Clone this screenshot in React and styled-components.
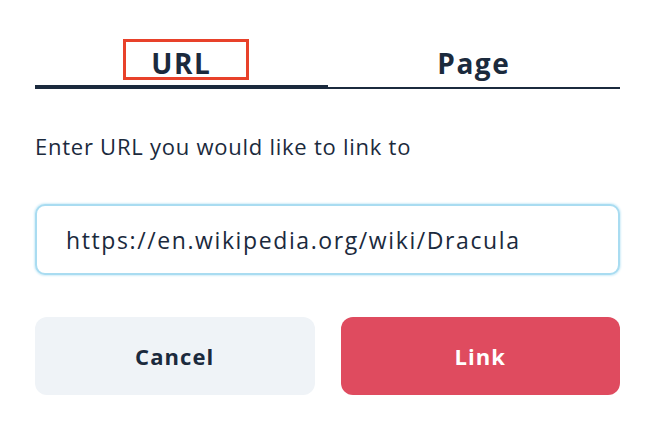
import { useState } from 'react';
import styled, { createGlobalStyle } from 'styled-components';

const GlobalStyle = createGlobalStyle`
  body {
    margin: 0;
    background: #ffffff;
    font-family: "Open Sans", "Liberation Sans", sans-serif;
    color: #1b2a3d;
  }
`;

const Dialog = styled.div`
  width: 585px;
  padding: 40px 0 0 35px;
  display: flex;
  flex-direction: column;
`;

const Tabs = styled.div`
  display: flex;
`;

const Tab = styled.button`
  position: relative;
  flex: 1;
  height: 49px;
  padding: 6px 0 9px;
  border: none;
  background: transparent;
  font-family: inherit;
  font-size: 28px;
  line-height: 34px;
  font-weight: 700;
  letter-spacing: 1.5px;
  color: #1b2a3d;
  cursor: pointer;
  box-shadow: inset 0 ${({ $active }) => ($active ? '-4px' : '-2px')} 0 #1b2a3d;
`;

/* highlight frame drawn over the active tab label */
const Highlight = styled.span`
  position: absolute;
  left: 88px;
  top: -1px;
  width: 126px;
  height: 41px;
  box-sizing: border-box;
  border: 3px solid #e8412a;
  pointer-events: none;
`;

const Label = styled.p`
  margin: 43px 0 0;
  font-size: 22px;
  line-height: 28px;
  letter-spacing: 0.75px;
`;

const UrlInput = styled.input`
  margin-top: 44px;
  height: 71px;
  box-sizing: border-box;
  padding: 0 29px;
  border: 2px solid #a9dcf1;
  border-radius: 10px;
  box-shadow: 0 0 2px 1px #d3eef9;
  font-family: inherit;
  font-size: 23px;
  letter-spacing: 1.6px;
  color: #1b2a3d;
  outline: none;
`;

const Actions = styled.div`
  margin-top: 42px;
  display: grid;
  grid-template-columns: 1fr 1fr;
  gap: 26px;
`;

const Button = styled.button`
  height: 78px;
  border: none;
  border-radius: 12px;
  font-family: inherit;
  font-size: 22px;
  font-weight: 700;
  letter-spacing: 1.1px;
  cursor: pointer;
  background: ${({ $primary }) => ($primary ? '#df4b5f' : '#eff3f7')};
  color: ${({ $primary }) => ($primary ? '#ffffff' : '#1b2a3d')};
`;

export default function App() {
  const [tab, setTab] = useState('url');
  const [url, setUrl] = useState('https://en.wikipedia.org/wiki/Dracula');

  return (
    <>
      <GlobalStyle />
      <Dialog>
        <Tabs>
          <Tab $active={tab === 'url'} onClick={() => setTab('url')}>
            URL
            {tab === 'url' && <Highlight />}
          </Tab>
          <Tab $active={tab === 'page'} onClick={() => setTab('page')}>
            Page
          </Tab>
        </Tabs>
        <Label>Enter URL you would like to link to</Label>
        <UrlInput value={url} onChange={(e) => setUrl(e.target.value)} />
        <Actions>
          <Button>Cancel</Button>
          <Button $primary>Link</Button>
        </Actions>
      </Dialog>
    </>
  );
}
